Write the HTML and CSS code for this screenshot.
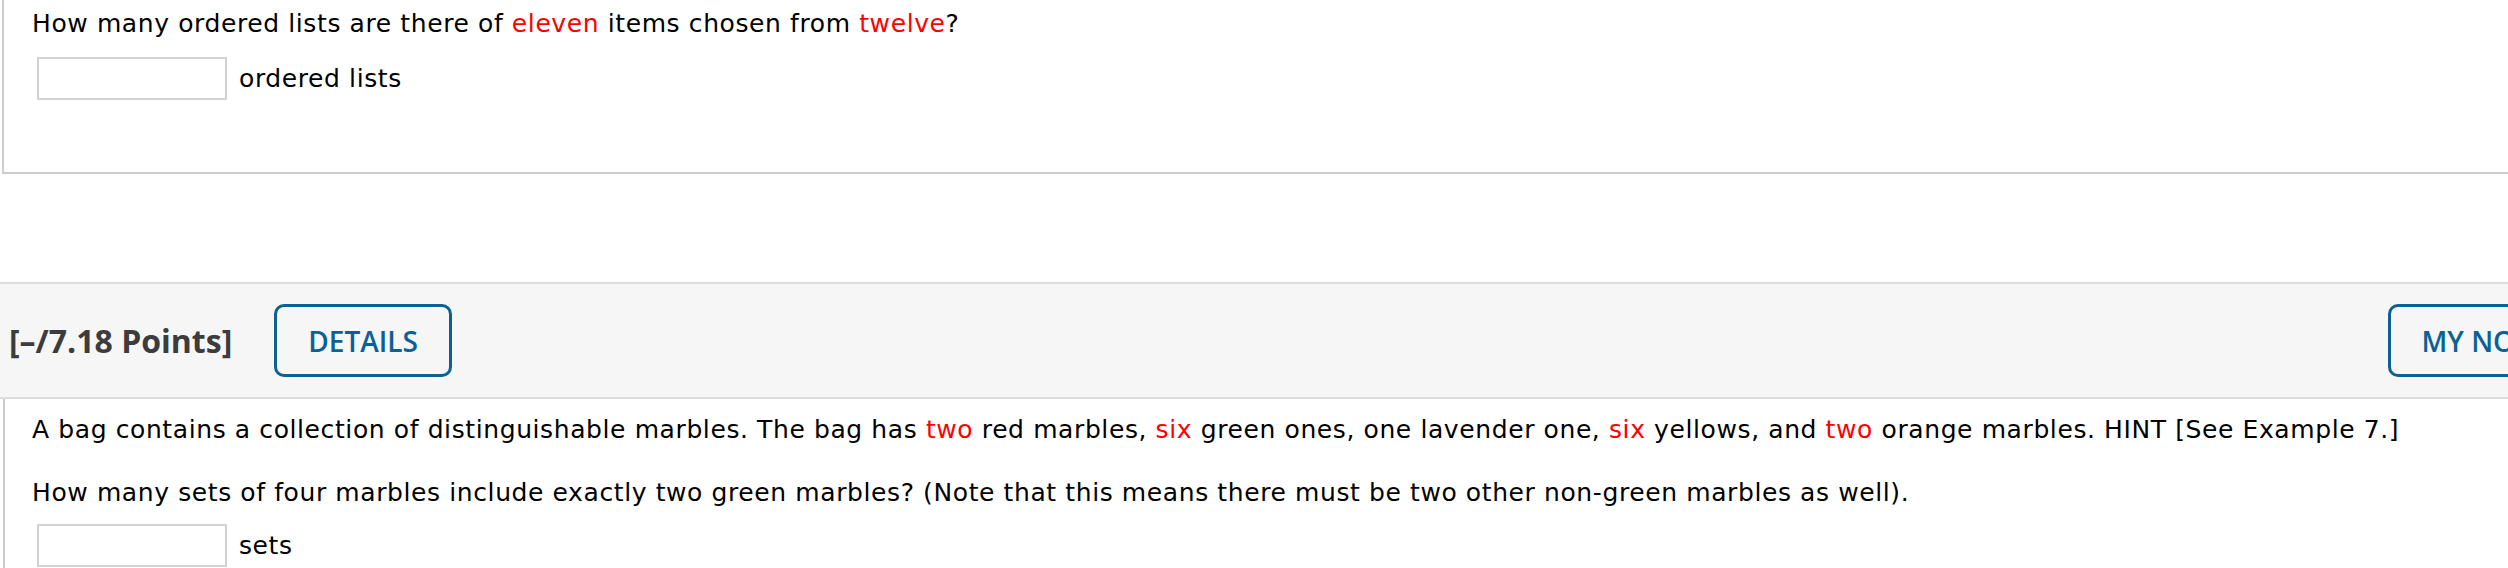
FILE: index.html
```html
<!DOCTYPE html>
<html lang="en">
<head>
  <meta charset="UTF-8">
  <title>Questions</title>
  <link rel="stylesheet" href="styles.css">
</head>
<body>
  <div class="question first">
    <div class="qbody">
      <p class="qtext">How many ordered lists are there of <span class="red">eleven</span> items chosen from <span class="red">twelve</span>?</p>
      <div class="answer">
        <input class="ans" type="text">
        <span>ordered lists</span>
      </div>
    </div>
  </div>

  <div class="question second">
    <div class="qhead">
      <span class="points">[&ndash;/7.18 Points]</span>
      <button class="btn">DETAILS</button>
      <button class="btn notes">MY NOTES</button>
    </div>
    <div class="qbody">
      <p class="qtext">A bag contains a collection of distinguishable marbles. The bag has <span class="red">two</span> red marbles, <span class="red">six</span> green ones, one lavender one, <span class="red">six</span> yellows, and <span class="red">two</span> orange marbles. HINT [See Example 7.]</p>
      <p class="qtext">How many sets of four marbles include exactly two green marbles? (Note that this means there must be two other non-green marbles as well).</p>
      <div class="answer">
        <input class="ans" type="text">
        <span>sets</span>
      </div>
    </div>
  </div>
</body>
</html>
```

FILE: styles.css
```css
html, body {
  margin: 0;
  padding: 0;
  background: white;
  overflow: hidden;
}
body {
  width: 2700px;
  font-family: "DejaVu Sans", Verdana, sans-serif;
  font-size: 25px;
  line-height: 30px;
  letter-spacing: 0.6px;
  color: #000;
}
.red {
  color: #ff0000;
}
.question {
  width: 2660px;
}
.qtext {
  margin: 0;
}
.qtext + .qtext {
  margin-top: 33px;
}
.answer {
  display: flex;
  align-items: center;
  gap: 12px;
  margin-left: 5px;
}
.ans {
  width: 190px;
  height: 43px;
  box-sizing: border-box;
  border: 2px solid #d2d2d2;
  margin: 0;
  padding: 0;
  background: white;
}

/* first question, its top is scrolled off */
.first {
  margin-left: 2px;
  border-left: 2px solid #cccccc;
  border-bottom: 2px solid #cccccc;
}
.first .qbody {
  padding: 9px 0 72px 28px;
}
.first .answer {
  margin-top: 18px;
}

.second {
  margin-top: 108px;
}
.qhead {
  display: flex;
  align-items: center;
  height: 113px;
  padding: 0 64px 0 9px;
  background: #f6f6f6;
  border-top: 2px solid #dddddd;
  border-bottom: 2px solid #dddddd;
  letter-spacing: normal;
}
.points {
  font-family: "Open Sans", sans-serif;
  font-weight: 700;
  font-size: 32px;
  color: #3c3c3c;
  margin-right: 42px;
}
.btn {
  font-family: "Open Sans", sans-serif;
  font-weight: 600;
  font-size: 28px;
  color: #0b6196;
  background: transparent;
  border: 3px solid #0b6196;
  border-radius: 10px;
  height: 73px;
  padding: 0 31px;
  cursor: pointer;
}
.notes {
  margin-left: auto;
}
.second .qbody {
  margin-left: 3px;
  border-left: 2px solid #cccccc;
  padding: 16px 0 40px 27px;
}
.second .answer {
  margin-top: 16px;
}
```
